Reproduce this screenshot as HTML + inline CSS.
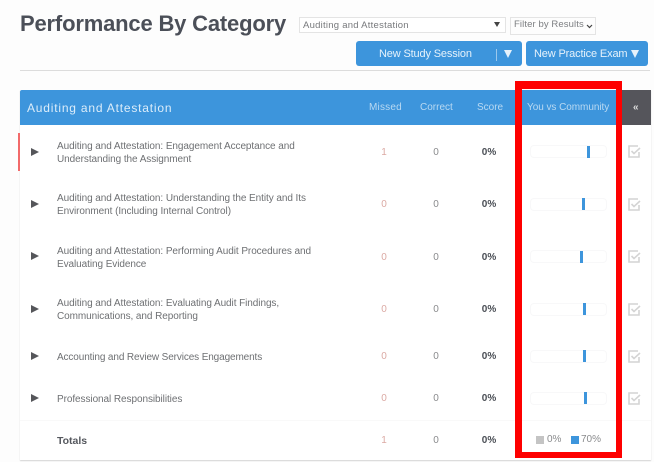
<!DOCTYPE html>
<html><head><meta charset="utf-8"><style>
html,body{margin:0;padding:0}
body{width:654px;height:462px;position:relative;overflow:hidden;background:#fdfdfd;font-family:"Liberation Sans",sans-serif;color:#6b6d70}
div,span.a{position:absolute;white-space:nowrap}
.t{left:57px;font-size:10px;line-height:13px;letter-spacing:-.07px;color:#6e7073}
.c{font-size:10px;width:40px;text-align:center;line-height:12px;margin-top:1px}
.m{left:364px;color:#dba9a3}.k{left:416px;color:#8a8b8d}.s{left:469px;color:#4a4e55;font-weight:bold}
.arr{left:31px;width:0;height:0;border-left:8px solid #55565a;border-top:4px solid transparent;border-bottom:4px solid transparent}
.tr{left:530px;width:75px;height:11px;border:1px solid #f8f8f9;border-radius:4px;background:#fff}
.bar{width:3px;height:12px;background:#3d95dc}
.h{top:102px;font-size:10px;line-height:12px;color:#b9d9f2}
.btn{background:#3d95dc;border-radius:3px;height:25px;top:41px}
.r{background:#fe0000}
.bt{top:47px;font-size:11px;line-height:14px;color:#e6f2fb;letter-spacing:-.15px}
</style></head><body>
<div style="left:20px;top:10px;font-size:22px;line-height:28px;font-weight:bold;color:#4b4f58;letter-spacing:-.18px">Performance By Category</div>
<div style="left:299px;top:17px;width:205px;height:14px;border:1px solid #e4e4e4;background:#fff"></div>
<div style="left:303px;top:20px;font-size:9.5px;line-height:12px;letter-spacing:.25px;color:#77797c">Auditing and Attestation</div>
<div style="left:494px;top:22px;width:0;height:0;border-top:5px solid #444;border-left:3px solid transparent;border-right:3px solid transparent"></div>
<div style="left:510px;top:17px;width:84px;height:16px;border:1px solid #e4e4e4;background:#fdfdfd"></div>
<div style="left:514px;top:19px;font-size:9.5px;line-height:12px;letter-spacing:.1px;color:#7c7e81">Filter by Results</div>
<svg style="position:absolute;left:586px;top:24px" width="8" height="5"><path d="M1 1l2.5 2.5L6 1" fill="none" stroke="#444" stroke-width="1.2"/></svg>

<div class="btn" style="left:356px;width:166px"></div>
<div class="bt" style="left:379px">New Study Session</div>
<div style="left:496px;top:49px;width:1px;height:12px;background:#9cc8ec"></div>
<div style="left:504px;top:50px;width:0;height:0;border-top:8px solid #e6f2fb;border-left:4px solid transparent;border-right:4px solid transparent"></div>
<div class="btn" style="left:526px;width:122px"></div>
<div class="bt" style="left:534px">New Practice Exam</div>
<div style="left:631px;top:50px;width:0;height:0;border-top:8px solid #e6f2fb;border-left:4px solid transparent;border-right:4px solid transparent"></div>
<div style="left:20px;top:70px;width:630px;height:1px;background:#dcdcdc"></div>

<div style="left:20px;top:90px;width:631px;height:370px;background:#fff;box-shadow:0 1px 1px #d5d5d5"></div>
<div style="left:20px;top:90px;width:603px;height:35px;background:#3d95dc;border-radius:2px 0 0 0"></div>
<div style="left:622px;top:90px;width:29px;height:35px;background:#55555b"></div>
<div style="left:27px;top:101px;font-size:12px;line-height:14px;letter-spacing:.8px;color:#dcedfa">Auditing and Attestation</div>
<div class="h" style="left:369px;letter-spacing:.2px">Missed</div>
<div class="h" style="left:420px">Correct</div>
<div class="h" style="left:477px">Score</div>
<div class="h" style="left:527px;letter-spacing:-.05px">You vs Community</div>
<div style="left:633px;top:101px;font-size:10px;line-height:14px;font-weight:bold;color:#ddd">«</div>

<div style="left:18px;top:133px;width:2px;height:38px;background:#f26a6a"></div>

<div class="arr" style="top:148px"></div>
<div class="t" style="top:140px">Auditing and Attestation: Engagement Acceptance and<br>Understanding the Assignment</div>
<div class="c m" style="top:146px">1</div><div class="c k" style="top:146px">0</div><div class="c s" style="top:146px">0%</div>
<div class="tr" style="top:145px"></div><div class="bar" style="left:587px;top:146px"></div>

<div class="arr" style="top:200px"></div>
<div class="t" style="top:192px">Auditing and Attestation: Understanding the Entity and Its<br>Environment (Including Internal Control)</div>
<div class="c m" style="top:198px">0</div><div class="c k" style="top:198px">0</div><div class="c s" style="top:198px">0%</div>
<div class="tr" style="top:198px"></div><div class="bar" style="left:582px;top:198px"></div>

<div class="arr" style="top:252px"></div>
<div class="t" style="top:245px">Auditing and Attestation: Performing Audit Procedures and<br>Evaluating Evidence</div>
<div class="c m" style="top:251px">0</div><div class="c k" style="top:251px">0</div><div class="c s" style="top:251px">0%</div>
<div class="tr" style="top:250px"></div><div class="bar" style="left:580px;top:251px"></div>

<div class="arr" style="top:305px"></div>
<div class="t" style="top:297px">Auditing and Attestation: Evaluating Audit Findings,<br>Communications, and Reporting</div>
<div class="c m" style="top:303px">0</div><div class="c k" style="top:303px">0</div><div class="c s" style="top:303px">0%</div>
<div class="tr" style="top:303px"></div><div class="bar" style="left:583px;top:303px"></div>

<div class="arr" style="top:352px"></div>
<div class="t" style="top:351px;letter-spacing:-.12px">Accounting and Review Services Engagements</div>
<div class="c m" style="top:350px">0</div><div class="c k" style="top:350px">0</div><div class="c s" style="top:350px">0%</div>
<div class="tr" style="top:350px"></div><div class="bar" style="left:583px;top:350px"></div>

<div class="arr" style="top:394px"></div>
<div class="t" style="top:393px">Professional Responsibilities</div>
<div class="c m" style="top:392px">0</div><div class="c k" style="top:392px">0</div><div class="c s" style="top:392px">0%</div>
<div class="tr" style="top:392px"></div><div class="bar" style="left:584px;top:392px"></div>

<div style="left:20px;top:420px;width:631px;height:1px;background:#f9f9f9"></div>
<div style="left:57px;top:435px;font-size:10.5px;line-height:13px;font-weight:bold;color:#55585e">Totals</div>
<div class="c m" style="top:434px">1</div><div class="c k" style="top:434px">0</div><div class="c s" style="top:434px">0%</div>
<div style="left:536px;top:436px;width:8px;height:8px;background:#c4c4c4"></div>
<div style="left:547px;top:434px;font-size:10px;line-height:12px;color:#8a8b8d">0%</div>
<div style="left:571px;top:436px;width:8px;height:8px;background:#3d95dc"></div>
<div style="left:581px;top:434px;font-size:10px;line-height:12px;color:#8a8b8d">70%</div>

<svg style="position:absolute;left:628px;top:145px" width="13" height="261" fill="none" stroke="#d4d4d4" stroke-width="1.6">
<g><path d="M10 1H1v11h10V7"/><path d="M3.5 6l2.5 2.5L12 3"/></g>
<g transform="translate(0,53)"><path d="M10 1H1v11h10V7"/><path d="M3.5 6l2.5 2.5L12 3"/></g>
<g transform="translate(0,105)"><path d="M10 1H1v11h10V7"/><path d="M3.5 6l2.5 2.5L12 3"/></g>
<g transform="translate(0,158)"><path d="M10 1H1v11h10V7"/><path d="M3.5 6l2.5 2.5L12 3"/></g>
<g transform="translate(0,205)"><path d="M10 1H1v11h10V7"/><path d="M3.5 6l2.5 2.5L12 3"/></g>
<g transform="translate(0,247)"><path d="M10 1H1v11h10V7"/><path d="M3.5 6l2.5 2.5L12 3"/></g>
</svg>

<div class="r" style="left:515px;top:81px;width:107px;height:8px"></div>
<div class="r" style="left:515px;top:452px;width:107px;height:6px"></div>
<div class="r" style="left:515px;top:81px;width:7px;height:377px"></div>
<div class="r" style="left:616px;top:81px;width:6px;height:377px"></div>
</body></html>
